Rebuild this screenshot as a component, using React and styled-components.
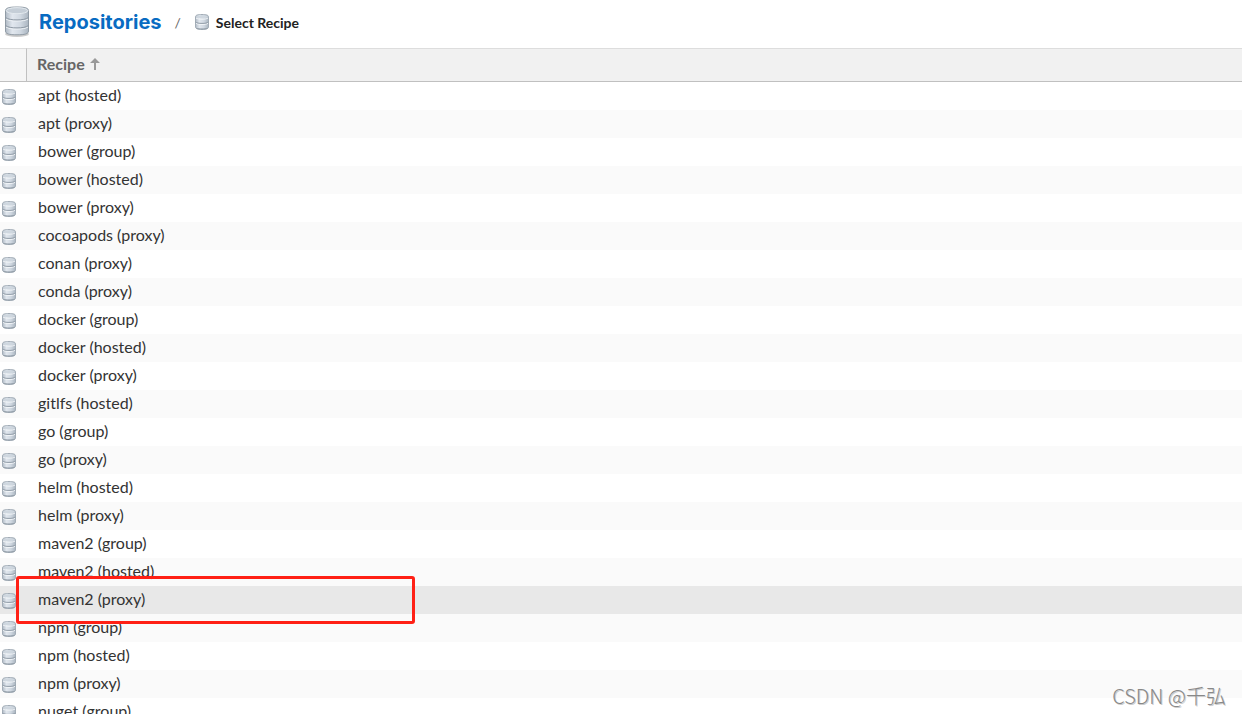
import React, { useId } from "react";
import styled, { createGlobalStyle } from "styled-components";

const GlobalStyle = createGlobalStyle`
    *, *::before, *::after {
        box-sizing: border-box;
    }
    body {
        margin: 0;
        background: #fff;
        color: #333;
        font-family: Lato, "Noto Sans CJK SC", sans-serif;
        font-size: 16px;
    }`;

const Page = styled.main`
        position: relative;
        height: 100vh;
        overflow: hidden;`,
    Breadcrumb = styled.nav`
        display: flex;
        align-items: center;
        height: 48px;
        padding: 0 4px 4px;`,
    FeatureLink = styled.a`
        display: flex;
        align-items: center;
        gap: 9px;
        color: #086bc2;
        font-family: Inter, sans-serif;
        font-size: 20px;
        font-weight: 700;
        line-height: 40px;
        text-decoration: none;`,
    Separator = styled.span`
        margin: 0 13px;
        color: #666;
        font-size: 14px;`,
    Current = styled.span`
        display: flex;
        align-items: center;
        gap: 6px;
        color: #222;
        font-size: 14px;
        font-weight: 700;`;

const Grid = styled.table`
        width: 100%;
        table-layout: fixed;
        border-collapse: separate;
        border-spacing: 0;`,
    HeaderCell = styled.th`
        width: ${p => (p.$icon ? "27px" : "auto")};
        height: 34px;
        padding: 0 10px 2px;
        border-top: 1px solid #ddd;
        border-bottom: 1px solid #c0c0c0;
        border-right: ${p => (p.$icon ? "1px solid #c0c0c0" : "none")};
        background: ${p => (p.$icon ? "#f5f5f5" : "#f1f1f1")};
        text-align: left;`,
    SortButton = styled.button`
        display: flex;
        align-items: center;
        gap: 5px;
        padding: 0;
        border: 0;
        background: none;
        color: #666;
        font: inherit;
        font-size: 16px;
        font-weight: 700;
        line-height: 20px;`,
    Row = styled.tr`
        position: relative;
        background: ${p => (p.$selected ? "#e8e8e8" : "#fff")};
        &:nth-child(even) {
            background: #fafafa;
        }`,
    IconCell = styled.td`
        height: 28px;
        padding: 2px 0 0 1px;
        line-height: 0;`,
    NameCell = styled.td`
        height: 28px;
        padding: 0 11px 2px;
        line-height: 20px;`,
    Highlight = styled.span`
        position: absolute;
        z-index: 1;
        top: -10px;
        bottom: -10px;
        left: 16px;
        width: 399px;
        border: 3px solid #ff2015;
        border-radius: 3px;
        pointer-events: none;`,
    Watermark = styled.span`
        position: absolute;
        right: 16px;
        bottom: 4px;
        color: #888;
        font-family: "Noto Sans CJK SC", sans-serif;
        font-size: 20px;
        font-weight: 300;
        line-height: 28px;
        text-shadow: 1px 1px 0 #ccc;`;

const recipes = [
    "apt (hosted)",
    "apt (proxy)",
    "bower (group)",
    "bower (hosted)",
    "bower (proxy)",
    "cocoapods (proxy)",
    "conan (proxy)",
    "conda (proxy)",
    "docker (group)",
    "docker (hosted)",
    "docker (proxy)",
    "gitlfs (hosted)",
    "go (group)",
    "go (proxy)",
    "helm (hosted)",
    "helm (proxy)",
    "maven2 (group)",
    "maven2 (hosted)",
    "maven2 (proxy)",
    "npm (group)",
    "npm (hosted)",
    "npm (proxy)",
    "nuget (group)"
];

const selectedRecipe = "maven2 (proxy)";

function SteelGradient({ id }) {
    return <defs>
        <linearGradient id={id}>
            <stop offset="0" stopColor="#b0bac5"/>
            <stop offset="0.3" stopColor="#e1e7ee"/>
            <stop offset="0.65" stopColor="#d0d8e1"/>
            <stop offset="1" stopColor="#aab5c0"/>
        </linearGradient>
    </defs>;
}

function SmallDatabase() {
    const id = useId();
    return <svg width="16" height="16" viewBox="0 0 16 16" aria-hidden="true">
        <SteelGradient id={id}/>
        <path d="M1.500 2.800C1.500 1 4 .5 8 .5s6.500.5 6.500 2.300v10.200c0 1.800-2.500 2.300-6.500 2.300s-6.500-.5-6.500-2.300z" fill={`url(#${id})`} stroke="#a3adb7"/>
        <ellipse cx="8" cy="2.700" rx="5.800" ry="1.500" fill="#cfd7df"/>
        <path d="M2 4c1.300.9 3.200 1.200 6 1.200s4.700-.3 6-1.200M2 9.300c1.300.9 3.200 1.200 6 1.200s4.700-.3 6-1.200" fill="none" stroke="#f2f5f8"/>
        <path d="M1.500 8c1.500 1.100 3.500 1.400 6.500 1.400s5-.3 6.500-1.400" fill="none" stroke="#929da8"/>
        <path d="M2.500 14.300c1.300.6 3.200.8 5.500.8s4.200-.2 5.500-.8" fill="none" stroke="#8995a0"/>
    </svg>;
}

function LargeDatabase() {
    const id = useId();
    return <svg width="26" height="32" viewBox="0 0 26 32" aria-hidden="true">
        <SteelGradient id={id}/>
        <ellipse cx="13" cy="28" rx="12" ry="3" fill="#ccc"/>
        <path d="M1.500 4.800C1.500 2 5 1 13 1s11.500 1 11.500 3.800v20.200c0 2.900-3.500 3.800-11.500 3.800S1.500 27.900 1.500 25z" fill={`url(#${id})`} stroke="#909ba5"/>
        <ellipse cx="13" cy="4.700" rx="10.800" ry="3" fill="#c5ced7" stroke="#e4eaef"/>
        <path d="M2 13c2.500 1.600 6 2 11 2s8.500-.4 11-2M2 21c2.500 1.600 6 2 11 2s8.500-.4 11-2" fill="none" stroke="#f0f4f7"/>
        <path d="M1.500 11.500c2.500 1.900 6.500 2.400 11.500 2.400s9-.5 11.500-2.400M1.500 19.500c2.500 1.900 6.500 2.400 11.500 2.400s9-.5 11.500-2.400" fill="none" stroke="#8d98a3"/>
    </svg>;
}

function SortArrow() {
    return <svg width="10" height="12" viewBox="0 0 10 12" aria-hidden="true">
        <path d="M5 0l5 5H6v7H4V5H0z" fill="#999"/>
    </svg>;
}

function RecipeRow({ name }) {
    const selected = name === selectedRecipe;
    return <Row $selected={selected} aria-selected={selected}>
        <IconCell><SmallDatabase/></IconCell>
        <NameCell>
            {name}
            {selected && <Highlight/>}
        </NameCell>
    </Row>;
}

export default function App() {
    return <Page>
        <GlobalStyle/>
        <Breadcrumb aria-label="Breadcrumb">
            <FeatureLink href="#repositories"><LargeDatabase/>Repositories</FeatureLink>
            <Separator>/</Separator>
            <Current><SmallDatabase/>Select Recipe</Current>
        </Breadcrumb>
        <Grid>
            <thead>
                <tr>
                    <HeaderCell $icon/>
                    <HeaderCell aria-sort="ascending">
                        <SortButton type="button">Recipe<SortArrow/></SortButton>
                    </HeaderCell>
                </tr>
            </thead>
            <tbody>
                {recipes.map(name => <RecipeRow key={name} name={name}/>)}
            </tbody>
        </Grid>
        <Watermark>CSDN @千弘</Watermark>
    </Page>;
}
